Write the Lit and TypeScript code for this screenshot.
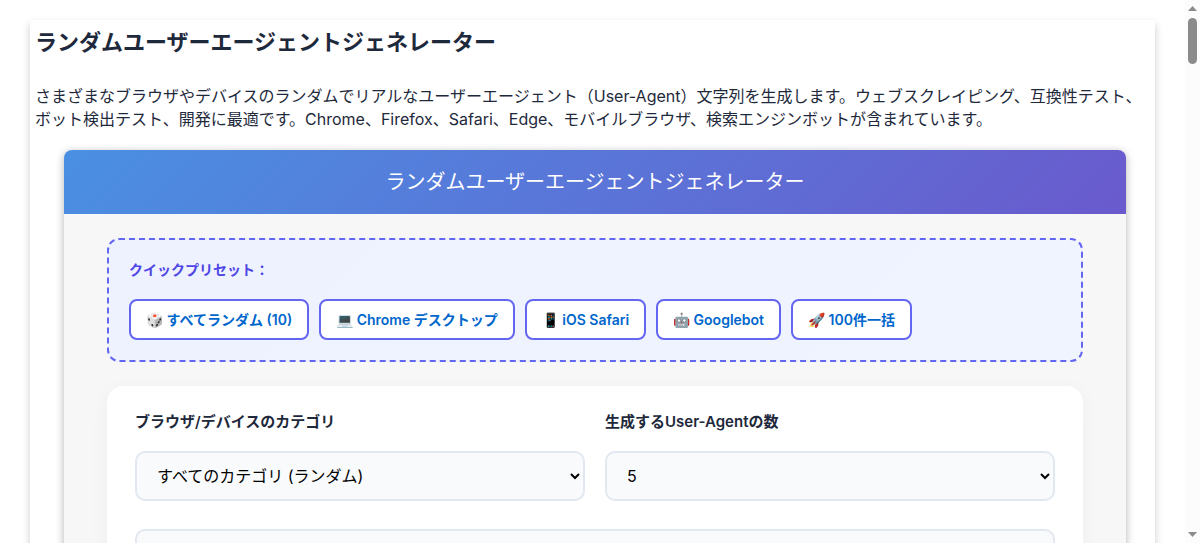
import { LitElement, html, css } from "lit";
import { customElement, state } from "lit/decorators.js";

interface Preset {
  icon: string;
  label: string;
  count: string;
}

const PRESETS: Preset[] = [
  { icon: "🎲", label: "すべてランダム (10)", count: "10" },
  { icon: "💻", label: "Chrome デスクトップ", count: "5" },
  { icon: "📱", label: "iOS Safari", count: "5" },
  { icon: "🤖", label: "Googlebot", count: "5" },
  { icon: "🚀", label: "100件一括", count: "100" },
];

const COUNTS = ["1", "5", "10", "20", "50", "100"];

@customElement("app-root")
export class AppRoot extends LitElement {
  static styles = css`
    :host {
      --font: Inter, "Noto Sans CJK JP", sans-serif;
      display: block;
      height: 100vh;
      overflow: hidden;
      font-family: var(--font);
      font-size: 16px;
      line-height: 23px;
      color: #1e293b;
      background: #fff;
    }
    * {
      box-sizing: border-box;
    }
    .window {
      display: grid;
      grid-template-columns: minmax(0, 1fr) 15px;
      height: 100%;
    }
    .viewport {
      overflow: hidden;
      padding: 20px 30px 0;
    }
    .article {
      padding: 5px;
      box-shadow: 0 4px 8px rgba(0, 0, 0, 0.2);
      background: #fff;
    }
    .title {
      margin: 0 0 26px;
      font-size: 22px;
      line-height: 34px;
      font-weight: 700;
    }
    .intro {
      margin: 0;
    }
    .tool {
      margin: 19px 24px 20px 29px;
      border-radius: 8px;
      background: #f7f7f7;
      box-shadow: 0 2px 8px rgba(0, 0, 0, 0.3);
      overflow: hidden;
    }
    .tool-header {
      margin: 0;
      padding: 16px;
      text-align: center;
      font-size: 20px;
      line-height: 32px;
      font-weight: 400;
      color: #fff;
      background: linear-gradient(135deg, #4a90e2, #6a5acd);
    }
    .tool-body {
      display: flex;
      flex-direction: column;
      gap: 24px;
      padding: 24px 43px;
    }
    .presets {
      padding: 20px;
      border: 2px dashed #6366f1;
      border-radius: 12px;
      background: linear-gradient(135deg, #eef2ff, #f0f4ff);
    }
    .presets-title {
      margin: 0 0 19px;
      font-size: 14px;
      line-height: 20px;
      font-weight: 600;
      color: #4f46e5;
    }
    .preset-list {
      display: flex;
      flex-wrap: wrap;
      gap: 10px;
    }
    .preset {
      padding: 10px 15px;
      border: 2px solid #6366f1;
      border-radius: 8px;
      background: #fff;
      color: #0066cc;
      font: 600 14px/17px var(--font);
      cursor: pointer;
    }
    .form {
      display: grid;
      grid-template-columns: repeat(2, minmax(0, 1fr));
      gap: 28px 20px;
      padding: 24px 28px 28px;
      border-radius: 16px;
      background: #fff;
      box-shadow: 0 4px 20px rgba(0, 0, 0, 0.04);
    }
    .field {
      display: flex;
      flex-direction: column;
      gap: 18px;
    }
    .label {
      font-size: 15px;
      line-height: 23px;
      font-weight: 600;
    }
    .select,
    .output {
      width: 100%;
      border: 2px solid #e2e8f0;
      border-radius: 10px;
      background: #f8fafc;
      font: 400 16px/23px var(--font);
      color: #000;
    }
    .select {
      height: 50px;
      padding: 0 0 0 16px;
    }
    .output {
      display: block;
      grid-column: 1 / -1;
      height: 160px;
      padding: 14px 16px;
      resize: none;
    }
    .scrollbar {
      display: flex;
      flex-direction: column;
      align-items: center;
      padding: 6px 0;
      background: #fcfcfc;
    }
    .arrow {
      display: block;
      width: 9px;
      height: 5px;
      fill: #8b8b8b;
    }
    .track {
      flex: 1;
      padding-top: 7px;
    }
    .thumb {
      width: 9px;
      height: 46px;
      border-radius: 5px;
      background: #8b8b8b;
    }
  `;

  @state() private count = "5";

  private onCount(e: Event) {
    this.count = (e.target as HTMLSelectElement).value;
  }

  render() {
    return html`
      <div class="window" lang="ja">
        <main class="viewport">
          <article class="article">
            <h1 class="title">ランダムユーザーエージェントジェネレーター</h1>
            <p class="intro">
              さまざまなブラウザやデバイスのランダムでリアルなユーザーエージェント（User-Agent）文字列を生成します。ウェブスクレイピング、互換性テスト、ボット検出テスト、開発に最適です。Chrome、Firefox、Safari、Edge、モバイルブラウザ、検索エンジンボットが含まれています。
            </p>
            <section class="tool">
              <h2 class="tool-header">ランダムユーザーエージェントジェネレーター</h2>
              <div class="tool-body">
                <div class="presets">
                  <h3 class="presets-title">クイックプリセット：</h3>
                  <div class="preset-list">
                    ${PRESETS.map(
                      (p) => html`<button class="preset" type="button" @click=${() => (this.count = p.count)}>${p.icon} ${p.label}</button>`
                    )}
                  </div>
                </div>
                <form class="form">
                  <div class="field">
                    <label class="label" for="category">ブラウザ/デバイスのカテゴリ</label>
                    <select class="select" id="category">
                      <option>すべてのカテゴリ (ランダム)</option>
                    </select>
                  </div>
                  <div class="field">
                    <label class="label" for="count">生成するUser-Agentの数</label>
                    <select class="select" id="count" @change=${this.onCount}>
                      ${COUNTS.map((n) => html`<option value=${n} ?selected=${n === this.count}>${n}</option>`)}
                    </select>
                  </div>
                  <textarea class="output" aria-label="User-Agent" readonly></textarea>
                </form>
              </div>
            </section>
          </article>
        </main>
        <div class="scrollbar" aria-hidden="true">
          <svg class="arrow" viewBox="0 0 9 5"><path d="M0 5 4.500 0 9 5z" /></svg>
          <div class="track"><div class="thumb"></div></div>
          <svg class="arrow" viewBox="0 0 9 5"><path d="M0 0h9L4.500 5z" /></svg>
        </div>
      </div>
    `;
  }
}
